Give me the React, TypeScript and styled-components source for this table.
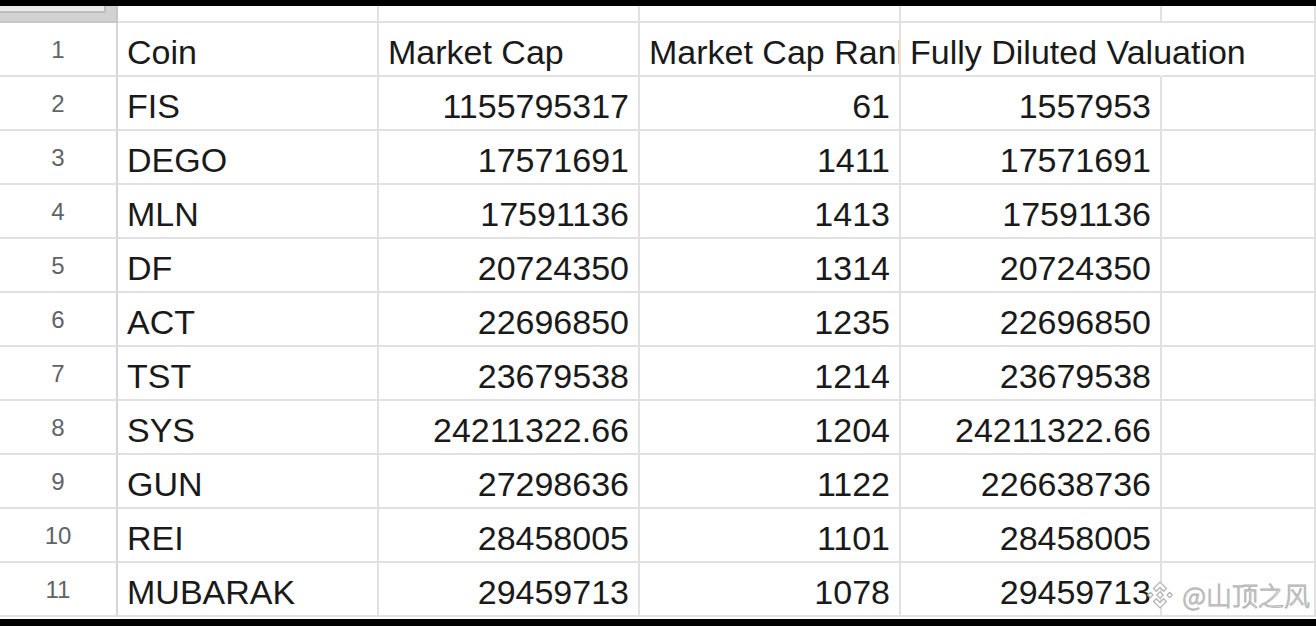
import React from "react";
import styled, { createGlobalStyle } from "styled-components";

const GlobalStyle = createGlobalStyle`
  html, body {
    margin: 0;
    padding: 0;
    background: #000;
  }
  body {
    width: 1316px;
    height: 626px;
    overflow: hidden;
  }
`;

const COLS = "118px 261px 261px 261px 261px 1fr";
const LINE = "#e1e1e1";

const Screen = styled.div`
  padding: 6px 0 7px;
  height: 626px;
  box-sizing: border-box;
`;

const Sheet = styled.div`
  position: relative;
  height: 100%;
  background: #fff;
  overflow: hidden;
  font-family: "Liberation Sans", Arial, sans-serif;
`;

const Row = styled.div<{ $height: number }>`
  display: grid;
  grid-template-columns: ${COLS};
  height: ${(p) => p.$height}px;
`;

const Corner = styled.div`
  background: #d2d2d2;
  border-right: 2px solid #c6c6c6;
  border-bottom: 2px solid #c6c6c6;
  box-sizing: border-box;
`;

const CornerInner = styled.div`
  width: 104px;
  height: 5px;
  background: #ededed;
  border-right: 2px solid #bdbdbd;
  border-bottom: 2px solid #bdbdbd;
`;

const ColHeader = styled.div`
  border-right: 2px solid ${LINE};
  border-bottom: 2px solid ${LINE};
  box-sizing: border-box;
`;

const RowNumber = styled.div`
  display: flex;
  align-items: center;
  justify-content: center;
  font-size: 24px;
  color: #606368;
  border-right: 2px solid #d6d6d6;
  border-bottom: 2px solid ${LINE};
  box-sizing: border-box;
  padding-top: 2px;
`;

const Cell = styled.div<{
  $align?: "left" | "right";
  $spill?: boolean;
  $clip?: boolean;
}>`
  display: flex;
  align-items: flex-end;
  justify-content: ${(p) => (p.$align === "right" ? "flex-end" : "flex-start")};
  padding: 0 ${(p) => (p.$clip ? 0 : 9)}px 4px 9px;
  font-size: 34px;
  line-height: 38px;
  color: #1a1a1a;
  white-space: nowrap;
  overflow: ${(p) => (p.$spill ? "visible" : "hidden")};
  position: relative;
  z-index: ${(p) => (p.$spill ? 1 : 0)};
  border-right: 2px solid ${(p) => (p.$spill ? "transparent" : LINE)};
  border-bottom: 2px solid ${LINE};
  box-sizing: border-box;
`;

const Watermark = styled.div`
  position: absolute;
  right: 6px;
  bottom: 6px;
  display: flex;
  align-items: center;
  gap: 7px;
  z-index: 5;
  pointer-events: none;
`;

const MarkText = styled.span`
  font-family: "Noto Sans CJK SC", "Noto Sans", sans-serif;
  font-size: 26px;
  font-weight: 300;
  color: rgba(255, 255, 255, 0.95);
  -webkit-text-stroke: 1px #b4b4b4;
`;

const rows: [string, string, string, string][] = [
  ["FIS", "1155795317", "61", "1557953"],
  ["DEGO", "17571691", "1411", "17571691"],
  ["MLN", "17591136", "1413", "17591136"],
  ["DF", "20724350", "1314", "20724350"],
  ["ACT", "22696850", "1235", "22696850"],
  ["TST", "23679538", "1214", "23679538"],
  ["SYS", "24211322.66", "1204", "24211322.66"],
  ["GUN", "27298636", "1122", "226638736"],
  ["REI", "28458005", "1101", "28458005"],
  ["MUBARAK", "29459713", "1078", "29459713"],
];

const BinanceMark = () => (
  <svg width="30" height="30" viewBox="0 0 28 28">
    <g fill="rgba(255,255,255,0.95)" stroke="#b4b4b4" strokeWidth="1.2" strokeLinejoin="miter">
      <path d="M14 2 L20 8 L17.5 10.5 L14 7 L10.5 10.5 L8 8 Z" />
      <path d="M14 26 L8 20 L10.5 17.5 L14 21 L17.5 17.5 L20 20 Z" />
      <path d="M5 11.5 L7.5 14 L5 16.5 L2.5 14 Z" />
      <path d="M23 11.5 L25.5 14 L23 16.5 L20.5 14 Z" />
      <path d="M14 11 L17 14 L14 17 L11 14 Z" />
    </g>
  </svg>
);

export default function App() {
  return (
    <>
      <GlobalStyle />
      <Screen>
        <Sheet>
          <Row $height={17}>
            <Corner>
              <CornerInner />
            </Corner>
            <ColHeader />
            <ColHeader />
            <ColHeader />
            <ColHeader />
            <ColHeader />
          </Row>
          <Row $height={54}>
            <RowNumber>1</RowNumber>
            <Cell>Coin</Cell>
            <Cell>Market Cap</Cell>
            <Cell $clip>Market Cap Rank</Cell>
            <Cell $spill>Fully Diluted Valuation</Cell>
            <Cell />
          </Row>
          {rows.map((r, i) => (
            <Row $height={54} key={r[0]}>
              <RowNumber>{i + 2}</RowNumber>
              <Cell>{r[0]}</Cell>
              <Cell $align="right">{r[1]}</Cell>
              <Cell $align="right">{r[2]}</Cell>
              <Cell $align="right">{r[3]}</Cell>
              <Cell />
            </Row>
          ))}
          <Watermark>
            <BinanceMark />
            <MarkText>@山顶之风</MarkText>
          </Watermark>
        </Sheet>
      </Screen>
    </>
  );
}
